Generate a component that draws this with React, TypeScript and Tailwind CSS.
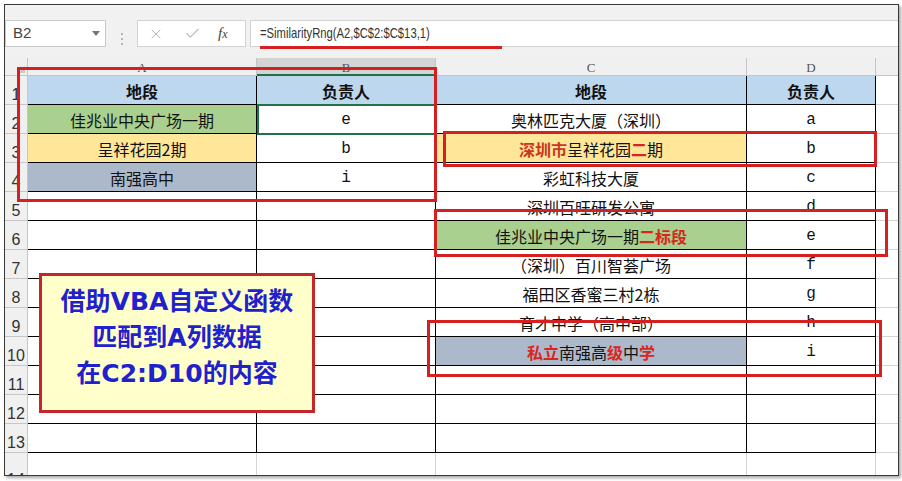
import { Check, X } from 'lucide-react'
import type { ReactNode } from 'react'

type RowData = {
  a?: ReactNode
  b?: string
  c?: ReactNode
  d?: string
  aBg?: string
  cBg?: string
  head?: boolean
}

const R = ({ children }: { children: ReactNode }) => (
  <span className="font-bold text-[#d9261c]">{children}</span>
)

const rows: RowData[] = [
  { a: '地段', b: '负责人', c: '地段', d: '负责人', head: true },
  { a: '佳兆业中央广场一期', b: 'e', c: '奥林匹克大厦（深圳）', d: 'a', aBg: 'bg-[#a9d08e]' },
  {
    a: '呈祥花园2期',
    b: 'b',
    c: (
      <>
        <span className="font-bold text-[#c8381e]">深圳市</span>呈祥花园<R>二</R>期
      </>
    ),
    d: 'b',
    aBg: 'bg-[#ffe699]',
    cBg: 'bg-[#ffe699]',
  },
  { a: '南强高中', b: 'i', c: '彩虹科技大厦', d: 'c', aBg: 'bg-[#acb9ca]' },
  { c: '深圳百旺研发公寓', d: 'd' },
  {
    c: (
      <>
        佳兆业中央广场一期<R>二标段</R>
      </>
    ),
    d: 'e',
    cBg: 'bg-[#a9d08e]',
  },
  { c: '（深圳）百川智荟广场', d: 'f' },
  { c: '福田区香蜜三村2栋', d: 'g' },
  { c: '育才中学（高中部）', d: 'h' },
  {
    c: (
      <>
        <R>私立</R>南强高<R>级</R>中<R>学</R>
      </>
    ),
    d: 'i',
    cBg: 'bg-[#acb9ca]',
  },
  {},
  {},
  {},
]

const cjk = "font-['Noto_Sans_CJK_SC',sans-serif]"
const mono = "font-['Liberation_Mono',monospace]"
const cell = 'flex items-center justify-center border-r border-b border-black pt-[2px] text-[16px] text-[#111] whitespace-nowrap'

function Toolbar() {
  return (
    <div className="flex h-[53px] bg-[#f1f1f1] pt-[15px]">
      <div className="relative flex h-[27px] w-[101px] items-center border border-[#c9c9c9] bg-white pl-[7px] font-['Liberation_Sans',sans-serif] text-[15px] text-[#444]">
        B2
        <span className="absolute right-[5px] top-[10px] h-0 w-0 border-x-[4px] border-t-[5px] border-x-transparent border-t-[#777]" />
      </div>
      <div className="ml-[15px] mr-[14px] flex flex-col justify-center gap-[3px]">
        <span className="h-[2px] w-[2px] bg-[#b5b5b5]" />
        <span className="h-[2px] w-[2px] bg-[#b5b5b5]" />
        <span className="h-[2px] w-[2px] bg-[#b5b5b5]" />
      </div>
      <div className="flex h-[27px] w-[109px] items-center border border-[#d2d2d2] bg-white pl-[10px]">
        <X size={16} strokeWidth={1.5} className="text-[#b8b8b8]" />
        <Check size={17} strokeWidth={1.5} className="ml-[20px] text-[#b8b8b8]" />
        <span className="ml-[17px] font-['Liberation_Serif',serif] text-[15px] italic text-[#444]">
          f<span className="text-[12px]">x</span>
        </span>
      </div>
      <div className="ml-[4px] flex h-[27px] flex-1 items-center overflow-hidden border-y border-l border-[#d2d2d2] bg-white pl-[9px]">
        <span className="origin-left scale-x-[0.75] font-['Liberation_Sans',sans-serif] text-[15px] whitespace-nowrap text-[#333]">
          =SimilarityRng(A2,$C$2:$C$13,1)
        </span>
      </div>
    </div>
  )
}

function ColumnHeaders() {
  const letter = "flex justify-center border-r border-b border-[#c6c6c6] pt-[3px] font-['Liberation_Serif',serif] text-[13px] leading-none text-[#555]"
  return (
    <div className="grid h-[18px] grid-cols-[23px_229px_179px_311px_129px_1fr] bg-[#f0f0f0]">
      <div className="relative border-r border-b border-[#c6c6c6]">
        <span className="absolute right-[2px] bottom-[2px] h-0 w-0 border-b-[7px] border-l-[7px] border-l-transparent border-b-[#c9c9c9]" />
      </div>
      <div className={letter}>A</div>
      <div className={`${letter} bg-[#d4d4d4] border-b-2 border-b-[#217346]`}>B</div>
      <div className={letter}>C</div>
      <div className={letter}>D</div>
      <div className="border-b border-[#c6c6c6]" />
    </div>
  )
}

function SheetRow({ n, r }: { n: number; r: RowData }) {
  const headBg = r.head ? 'bg-[#bdd7ee] font-bold' : ''
  return (
    <div className="grid h-[29px] grid-cols-[23px_229px_179px_311px_129px_1fr]">
      <div className="flex items-end justify-center border-r border-b border-[#c6c6c6] bg-[#f0f0f0] pb-[1px] font-['Liberation_Sans',sans-serif] text-[16px] leading-none text-[#333]">
        {n}
      </div>
      <div className={`${cell} ${cjk} ${headBg} ${r.aBg ?? ''}`}>{r.a}</div>
      <div className={`${cell} ${r.head ? `${cjk} ${headBg}` : `${mono} text-[15px]`}`}>{r.b}</div>
      <div className={`${cell} ${cjk} ${headBg} ${r.cBg ?? ''}`}>{r.c}</div>
      <div className={`${cell} ${r.head ? `${cjk} ${headBg}` : `${mono} text-[15px]`}`}>{r.d}</div>
      <div className="border-b border-[#d4d4d4]" />
    </div>
  )
}

function LastRow() {
  const g = 'border-r border-[#d4d4d4]'
  return (
    <div className="grid h-[29px] grid-cols-[23px_229px_179px_311px_129px_1fr]">
      <div className="flex items-end justify-center border-r border-[#c6c6c6] bg-[#f0f0f0] font-['Liberation_Sans',sans-serif] text-[16px] leading-none text-[#333]">
        <span className="translate-y-[6px]">14</span>
      </div>
      <div className={g} />
      <div className={g} />
      <div className={g} />
      <div className={g} />
      <div />
    </div>
  )
}

export default function App() {
  return (
    <div className="relative h-[481px] w-[902px] overflow-hidden bg-white">
      <div className="ml-[4px] mt-[4px] h-[472px] w-[895px] overflow-hidden border border-[#3a3a3a] bg-white shadow-[2px_2px_3px_rgba(0,0,0,0.35)]">
        <Toolbar />
        <ColumnHeaders />
        {rows.map((r, i) => (
          <SheetRow key={i} n={i + 1} r={r} />
        ))}
        <LastRow />
      </div>

      {/* selected cell B2 */}
      <div className="absolute left-[257px] top-[104px] h-[31px] w-[180px] border-2 border-[#217346]" />

      {/* annotations */}
      <div className="absolute left-[260px] top-[46px] h-[3px] w-[242px] bg-[#d42020]" />
      <div className="absolute left-[17px] top-[67px] h-[135px] w-[420px] border-[3px] border-[#d42020]" />
      <div className="absolute left-[443px] top-[131px] h-[36px] w-[434px] border-[3px] border-[#d42020]" />
      <div className="absolute left-[434px] top-[209px] h-[48px] w-[454px] border-[3px] border-[#d42020]" />
      <div className="absolute left-[427px] top-[320px] h-[57px] w-[455px] border-[3px] border-[#d42020]" />

      <div className="absolute left-[39px] top-[273px] flex h-[140px] w-[276px] flex-col items-center border-[3px] border-[#c4262a] bg-[#ffffcc] pt-[8px] font-['DejaVu_Sans','Noto_Sans_CJK_SC',sans-serif] text-[25px] font-bold leading-[36px] text-[#1f22cc]">
        <div>借助VBA自定义函数</div>
        <div>匹配到A列数据</div>
        <div>在C2:D10的内容</div>
      </div>
    </div>
  )
}
